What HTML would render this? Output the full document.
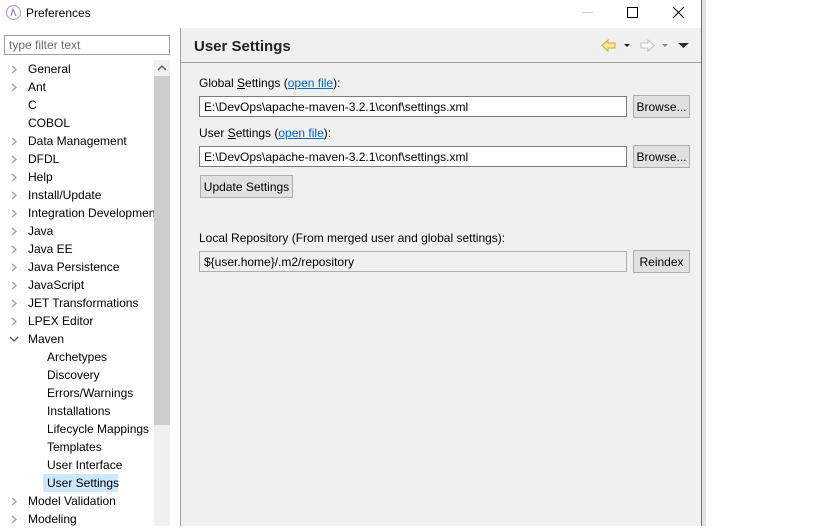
<!DOCTYPE html>
<html><head><meta charset="utf-8"><style>
*{margin:0;padding:0;box-sizing:border-box}
body{width:819px;height:526px;overflow:hidden;background:#fff;font-family:"Liberation Sans",sans-serif;font-size:12px;color:#000;position:relative}
.a{position:absolute}
.tree div{position:absolute;height:18px;line-height:18px;white-space:nowrap}
.chev{position:absolute;left:10px;top:5px;width:8px;height:9px}
.box{position:absolute;background:#fff;border:1px solid #7a7a7a;height:21px;line-height:19px;padding-left:4px}
.btn{position:absolute;background:#e1e1e1;border:1px solid #adadad;height:23px;line-height:21px;text-align:center}
u{text-decoration:underline}
a{color:#0066cc}
</style></head><body>
<svg width="0" height="0" style="position:absolute"><defs><symbol id="c" viewBox="0 0 8 9"><path d="M2 1L6 4.5L2 8" fill="none" stroke="#a0a0a0" stroke-width="1.3"/></symbol></defs></svg>
<!-- title bar -->
<svg class="a" style="left:5px;top:4px" width="17" height="17" viewBox="0 0 17 17"><circle cx="8.5" cy="8.5" r="7" fill="none" stroke="#b9a6d6" stroke-width="1.3"/><path d="M6 12 L8 5 L11 12" fill="none" stroke="#9a80c0" stroke-width="1.2"/></svg>
<div class="a" style="left:26px;top:6px;font-size:12px">Preferences</div>
<div class="a" style="left:582px;top:12px;width:11px;height:1px;background:#ccc"></div>
<div class="a" style="left:627px;top:7px;width:11px;height:11px;border:1px solid #000"></div>
<svg class="a" style="left:672px;top:6px" width="13" height="13"><path d="M1 1L12 12M12 1L1 12" stroke="#000" stroke-width="1"/></svg>

<!-- filter -->
<div class="a" style="left:4px;top:35px;width:166px;height:20px;border:1px solid #a0a0a0;color:#6d6d6d;padding-left:4px;line-height:19px">type filter text</div>

<!-- scrollbar -->
<div class="a" style="left:154px;top:60px;width:16px;height:466px;background:#f0f0f0"></div>
<div class="a" style="left:154px;top:76px;width:16px;height:349px;background:#cdcdcd"></div>
<svg class="a" style="left:157px;top:64px" width="10" height="8"><path d="M1 6L5 2L9 6" fill="none" stroke="#606060" stroke-width="1.5"/></svg>

<div class="tree">
<div style="left:0;top:60px;width:150px"><svg class="chev"><use href="#c"/></svg><span style="position:absolute;left:28px">General</span></div>
<div style="left:0;top:78px;width:150px"><svg class="chev"><use href="#c"/></svg><span style="position:absolute;left:28px">Ant</span></div>
<div style="left:28px;top:96px">C</div>
<div style="left:28px;top:114px">COBOL</div>
<div style="left:0;top:132px;width:150px"><svg class="chev"><use href="#c"/></svg><span style="position:absolute;left:28px">Data Management</span></div>
<div style="left:0;top:150px;width:150px"><svg class="chev"><use href="#c"/></svg><span style="position:absolute;left:28px">DFDL</span></div>
<div style="left:0;top:168px;width:150px"><svg class="chev"><use href="#c"/></svg><span style="position:absolute;left:28px">Help</span></div>
<div style="left:0;top:186px;width:150px"><svg class="chev"><use href="#c"/></svg><span style="position:absolute;left:28px">Install/Update</span></div>
<div style="left:0;top:204px;width:154px;overflow:hidden"><svg class="chev"><use href="#c"/></svg><span style="position:absolute;left:28px">Integration Development</span></div>
<div style="left:0;top:222px;width:150px"><svg class="chev"><use href="#c"/></svg><span style="position:absolute;left:28px">Java</span></div>
<div style="left:0;top:240px;width:150px"><svg class="chev"><use href="#c"/></svg><span style="position:absolute;left:28px">Java EE</span></div>
<div style="left:0;top:258px;width:150px"><svg class="chev"><use href="#c"/></svg><span style="position:absolute;left:28px">Java Persistence</span></div>
<div style="left:0;top:276px;width:150px"><svg class="chev"><use href="#c"/></svg><span style="position:absolute;left:28px">JavaScript</span></div>
<div style="left:0;top:294px;width:150px"><svg class="chev"><use href="#c"/></svg><span style="position:absolute;left:28px">JET Transformations</span></div>
<div style="left:0;top:312px;width:150px"><svg class="chev"><use href="#c"/></svg><span style="position:absolute;left:28px">LPEX Editor</span></div>
<div style="left:0;top:330px;width:150px"><svg class="a" style="left:9px;top:6px" width="10" height="7"><path d="M1 1L5 5L9 1" fill="none" stroke="#555" stroke-width="1.3"/></svg><span style="position:absolute;left:28px">Maven</span></div>
<div style="left:47px;top:348px">Archetypes</div>
<div style="left:47px;top:366px">Discovery</div>
<div style="left:47px;top:384px">Errors/Warnings</div>
<div style="left:47px;top:402px">Installations</div>
<div style="left:47px;top:420px">Lifecycle Mappings</div>
<div style="left:47px;top:438px">Templates</div>
<div style="left:47px;top:456px">User Interface</div>
<div style="left:43px;top:474px;width:75px;background:#cce8ff;padding-left:4px">User Settings</div>
<div style="left:0;top:492px;width:150px"><svg class="chev"><use href="#c"/></svg><span style="position:absolute;left:28px">Model Validation</span></div>
<div style="left:0;top:510px;width:150px"><svg class="chev"><use href="#c"/></svg><span style="position:absolute;left:28px">Modeling</span></div>
</div>

<!-- right panel -->
<div class="a" style="left:180px;top:28px;width:1px;height:498px;background:#a0a0a0"></div>
<div class="a" style="left:181px;top:28px;width:520px;height:498px;background:#f0f0f0"></div>
<div class="a" style="left:181px;top:62px;width:520px;height:1px;background:#a0a0a0"></div>
<div class="a" style="left:701px;top:0;width:1px;height:526px;background:#6e6e6e"></div>
<div class="a" style="left:702px;top:0;width:4px;height:526px;background:#e3e3e3"></div>
<div class="a" style="left:194px;top:38px;font-size:15px;font-weight:bold;color:#222">User Settings</div>

<svg class="a" style="left:600px;top:38px" width="92" height="16">
<path d="M2 7.5L8 2V5H15V10H8V13Z" fill="#fbe7a5" stroke="#d9a520" stroke-width="1"/>
<path d="M24 6H30L27 9Z" fill="#222"/>
<path d="M54 7.5L48 2V5H41V10H48V13Z" fill="#fff" stroke="#bbb" stroke-width="1"/>
<path d="M62 6H68L65 9Z" fill="#888"/>
<path d="M78 5H89L83.5 10Z" fill="#302a40"/>
</svg>

<div class="a" style="left:199px;top:76px">Global <u>S</u>ettings (<a><u>open file</u></a>):</div>
<div class="box" style="left:199px;top:96px;width:428px;line-height:20px">E:\DevOps\apache-maven-3.2.1\conf\settings.xml</div>
<div class="btn" style="left:633px;top:95px;width:57px;line-height:22px">Browse...</div>
<div class="a" style="left:199px;top:126px">User <u>S</u>ettings (<a><u>open file</u></a>):</div>
<div class="box" style="left:199px;top:146px;width:428px;line-height:20px">E:\DevOps\apache-maven-3.2.1\conf\settings.xml</div>
<div class="btn" style="left:633px;top:145px;width:57px;line-height:22px">Browse...</div>
<div class="btn" style="left:200px;top:175px;width:93px;line-height:22px">Update Settings</div>
<div class="a" style="left:199px;top:231px">Local Repository (From merged user and global settings):</div>
<div class="box" style="left:199px;top:251px;width:428px;background:#f0f0f0;border-color:#adadad;line-height:20px">${user.home}/.m2/repository</div>
<div class="btn" style="left:633px;top:250px;width:57px;line-height:22px">Reindex</div>
</body></html>
